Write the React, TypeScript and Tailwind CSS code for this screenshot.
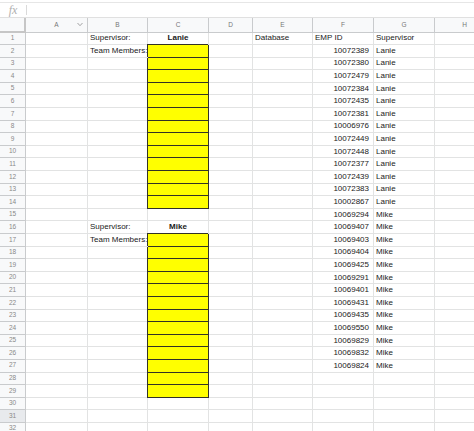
const COLS = [
  { key: "A", w: "w-[62px]" },
  { key: "B", w: "w-[60px]" },
  { key: "C", w: "w-[61px]" },
  { key: "D", w: "w-[44px]" },
  { key: "E", w: "w-[60px]" },
  { key: "F", w: "w-[61px]" },
  { key: "G", w: "w-[61px]" },
  { key: "H", w: "w-[60px]" },
];

const IDS = [
  "10072389", "10072380", "10072479", "10072384", "10072435", "10072381", "10006976",
  "10072449", "10072448", "10072377", "10072439", "10072383", "10002867",
  "10069294", "10069407", "10069403", "10069404", "10069425", "10069291", "10069401",
  "10069431", "10069435", "10069550", "10069829", "10069832", "10069824",
];

type Cell = { text?: string; bold?: boolean; center?: boolean; right?: boolean; yellow?: boolean; first?: boolean };

function buildRow(n: number): Record<string, Cell> {
  const r: Record<string, Cell> = {};
  if (n === 1 || n === 16) {
    r.B = { text: "Supervisor:" };
    r.C = { text: n === 1 ? "Lanie" : "Mike", bold: true, center: true };
  }
  if (n === 2 || n === 17) r.B = { text: "Team Members:" };
  if ((n >= 2 && n <= 14) || (n >= 17 && n <= 29)) r.C = { yellow: true, first: n === 2 || n === 17 };
  if (n === 1) {
    r.E = { text: "Database" };
    r.F = { text: "EMP ID" };
    r.G = { text: "Supervisor" };
  }
  if (n >= 2 && n <= 27) {
    r.F = { text: IDS[n - 2], right: true };
    r.G = { text: n <= 14 ? "Lanie" : "Mike" };
  }
  return r;
}

const ROWS = Array.from({ length: 32 }, (_, i) => i + 1);

function DataCell({ w, cell }: { w: string; cell?: Cell }) {
  if (cell?.yellow) {
    return (
      <div
        className={`${w} h-full shrink-0 box-border bg-[#ffff00] border-r border-b border-[#333326] ${
          cell.first ? "shadow-[-1px_-1px_0_#333326]" : "shadow-[-1px_0_0_#333326]"
        }`}
      />
    );
  }
  return (
    <div
      className={`${w} h-full shrink-0 box-border border-r border-b border-[#e2e3e3] flex items-center px-[2px] whitespace-nowrap text-[8px] leading-none text-[#1a1a1a] ${
        cell?.center ? "justify-center" : cell?.right ? "justify-end pr-[4px]" : "justify-start"
      } ${cell?.bold ? "font-bold" : ""}`}
    >
      {cell?.text}
    </div>
  );
}

export default function App() {
  return (
    <div className="w-[474px] h-[431px] overflow-hidden bg-white font-['Liberation_Sans',Arial,sans-serif]">
      {/* formula bar */}
      <div className="mt-[2px] h-[15px] border-t border-[#e6e6e6] flex items-center box-border">
        <div className="w-[26px] flex justify-center">
          <span className="font-['Liberation_Serif',serif] italic text-[12px] text-[#b0b0b0] leading-none">fx</span>
        </div>
        <div className="w-px h-[10px] bg-[#dadada]" />
      </div>

      {/* column headers */}
      <div className="flex h-[15.5px] bg-[#f8f9fa] border-t border-[#e0e0e0] box-border">
        <div className="w-[26px] h-full shrink-0 box-border border-r-2 border-b-2 border-[#c6c6c6]" />
        {COLS.map((c) => (
          <div
            key={c.key}
            className={`${c.w} h-full shrink-0 box-border border-r border-b border-[#c9cbcd] relative flex items-center justify-center text-[6.5px] text-[#777] leading-none`}
          >
            {c.key}
            {c.key === "A" && (
              <span className="absolute right-[3px] top-1/2 -translate-y-1/2 w-[9px] h-[9px] flex items-center justify-center">
                <svg width="6" height="4" viewBox="0 0 6 4">
                  <path d="M0.5 0.5 L3 3.2 L5.5 0.5" fill="none" stroke="#999" strokeWidth="0.9" />
                </svg>
              </span>
            )}
          </div>
        ))}
      </div>

      {/* rows */}
      {ROWS.map((n) => {
        const row = buildRow(n);
        return (
          <div key={n} className="flex h-[12.6px]">
            <div
              className={`w-[26px] h-full shrink-0 box-border border-r border-b border-[#c9cbcd] flex items-center justify-center text-[6.5px] leading-none text-[#888] ${
                n === 31 ? "bg-[#e8eaed]" : "bg-[#f8f9fa]"
              }`}
            >
              {n}
            </div>
            {COLS.map((c) => (
              <DataCell key={c.key} w={c.w} cell={row[c.key]} />
            ))}
          </div>
        );
      })}
    </div>
  );
}
